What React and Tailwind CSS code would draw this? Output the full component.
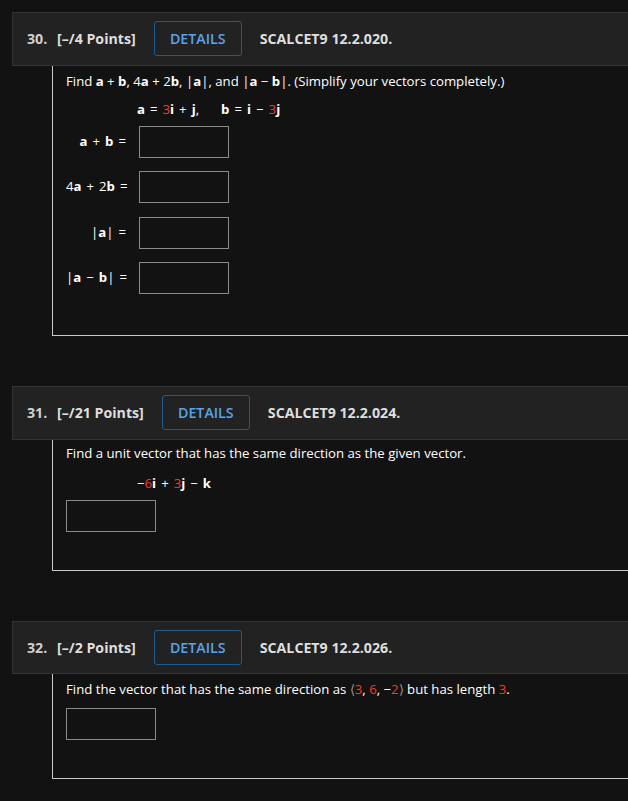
import React from 'react'

function R({ children }) {
  return <span className="text-[#f23b23]">{children}</span>
}

function B({ children }) {
  return <b className="font-bold">{children}</b>
}

// operator with math spacing
function Op({ children }) {
  return <span className="mx-[5px]">{children}</span>
}

function Header({ num, points, code }) {
  return (
    <div className="flex items-center h-[53.5px] bg-[#222222] border border-r-0 border-[#333333] pl-[14px] font-bold text-[14.2px]">
      <span className="w-[30px] text-[#cfcfcf]">{num}</span>
      <span className="text-[#dedede]">{points}</span>
      <button className="ml-[18px] w-[88px] h-[35px] border border-[#1d5c8f] rounded-[3px] text-[#5aa3e8] bg-transparent font-semibold">
        DETAILS
      </button>
      <span className="ml-[18px] text-[#dedede]">{code}</span>
    </div>
  )
}

function Box({ className = '' }) {
  return <div className={`w-[90px] h-[32px] border border-[#8a8a8a] bg-[#121212] ${className}`} />
}

function Row({ label }) {
  return (
    <div className="flex items-center">
      <div className="w-[65px] text-right text-white whitespace-nowrap">{label}</div>
      <Box className="ml-[8px]" />
    </div>
  )
}

export default function App() {
  return (
    <div className="min-h-screen bg-[#121212] pt-[12px] pl-[12px] font-['Open_Sans',sans-serif] text-[13.2px] text-white">
      {/* 30 */}
      <Header num="30." points="[–/4 Points]" code="SCALCET9 12.2.020." />
      <div className="ml-[40px] border-l border-b border-[#c9c9c9] pt-[7px] pl-[13px] pb-[41px]">
        <p className="leading-[16px] whitespace-nowrap">
          Find <B>a</B> + <B>b</B>, 4<B>a</B> + 2<B>b</B>, |<B>a</B>|, and |<B>a</B> − <B>b</B>|. (Simplify your vectors completely.)
        </p>
        <div className="mt-[12px] pl-[71px] leading-[16px] whitespace-nowrap">
          <B>a</B><Op>=</Op><R>3</R><B>i</B><Op>+</Op><B>j</B>,<span className="inline-block w-[22px]" />
          <B>b</B><Op>=</Op><B>i</B><Op>−</Op><R>3</R><B>j</B>
        </div>
        <div className="mt-[9px] flex flex-col gap-[13.5px]">
          <Row label={<><B>a</B><Op>+</Op><B>b</B><Op>=</Op></>} />
          <Row label={<>4<B>a</B><Op>+</Op>2<B>b</B><Op>=</Op></>} />
          <Row label={<>|<B>a</B>|<Op>=</Op></>} />
          <Row label={<>|<B>a</B><Op>−</Op><B>b</B>|<Op>=</Op></>} />
        </div>
      </div>

      {/* 31 */}
      <div className="mt-[50px]">
        <Header num="31." points="[–/21 Points]" code="SCALCET9 12.2.024." />
      </div>
      <div className="ml-[40px] border-l border-b border-[#c9c9c9] pt-[5px] pl-[13px] pb-[38px]">
        <p className="leading-[16px]">Find a unit vector that has the same direction as the given vector.</p>
        <div className="mt-[14px] pl-[71px] leading-[16px]">
          −<R>6</R><B>i</B><Op>+</Op><R>3</R><B>j</B><Op>−</Op><B>k</B>
        </div>
        <Box className="mt-[9px]" />
      </div>

      {/* 32 */}
      <div className="mt-[50px]">
        <Header num="32." points="[–/2 Points]" code="SCALCET9 12.2.026." />
      </div>
      <div className="ml-[40px] border-l border-b border-[#c9c9c9] pt-[7px] pl-[13px] pb-[38px]">
        <p className="leading-[16px]">
          Find the vector that has the same direction as <span className="text-[#9a9a9a]">⟨</span>
          <R>3</R>, <R>6</R>, −<R>2</R>
          <span className="text-[#9a9a9a]">⟩</span> but has length <R>3</R>.
        </p>
        <Box className="mt-[11px]" />
      </div>
    </div>
  )
}
